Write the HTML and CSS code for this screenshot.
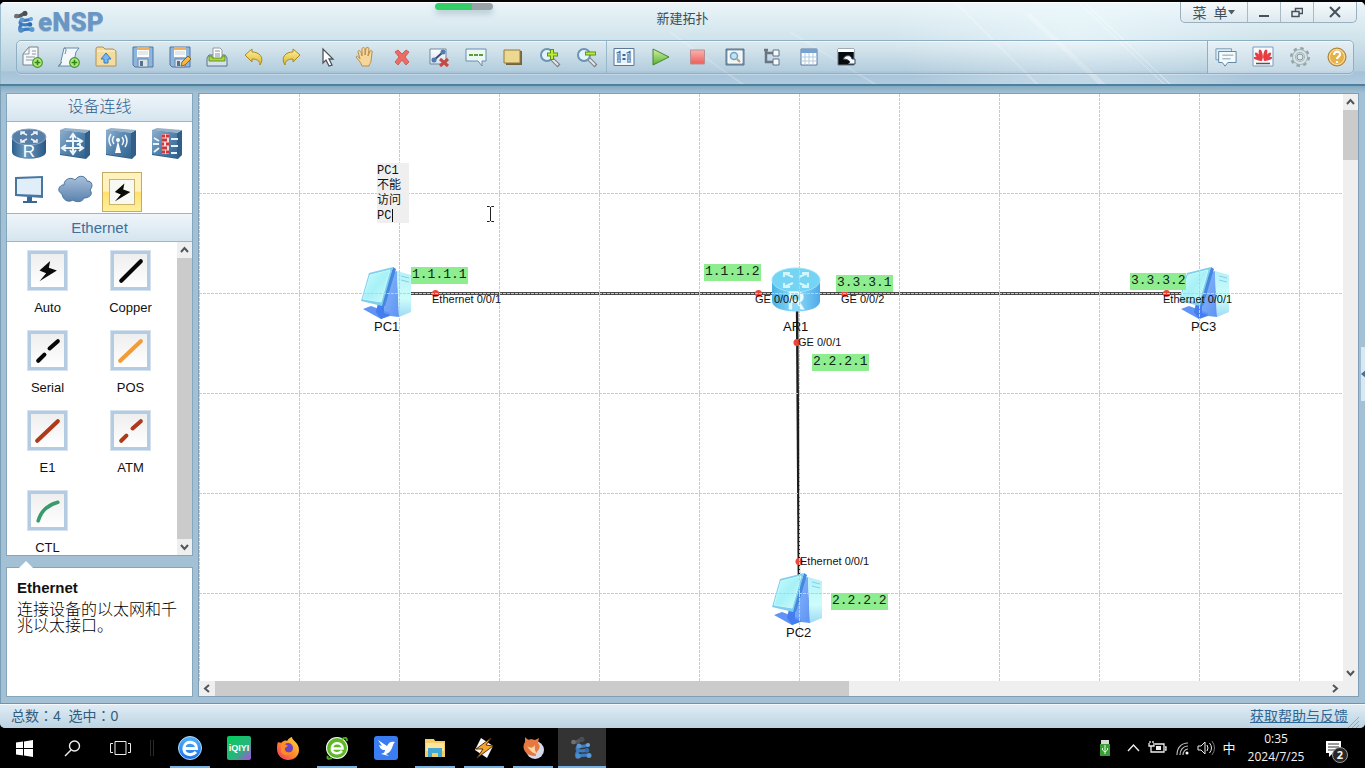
FILE: index.html
```html
<!DOCTYPE html>
<html lang="zh-CN">
<head>
<meta charset="utf-8">
<title>eNSP</title>
<link rel="stylesheet" href="styles.css">
</head>
<body>
<svg class="defs" aria-hidden="true">
  <defs>
    <linearGradient id="gScreen" x1="0" y1="0" x2="1" y2="1"><stop offset="0" stop-color="#c9fcfa"/><stop offset=".5" stop-color="#a6f1f7"/><stop offset="1" stop-color="#d2fdf8"/></linearGradient>
    <linearGradient id="gTower" x1="0" y1="0" x2="1" y2="1"><stop offset="0" stop-color="#8fbdfb"/><stop offset="1" stop-color="#5e92f3"/></linearGradient>
    <linearGradient id="gTowerL" x1="0" y1="0" x2="0" y2="1"><stop offset="0" stop-color="#b5f1f8"/><stop offset=".6" stop-color="#cdfdfb"/><stop offset="1" stop-color="#9ed9f5"/></linearGradient>
    <linearGradient id="gCyl" x1="0" y1="0" x2="1" y2="0"><stop offset="0" stop-color="#4cb2e8"/><stop offset=".5" stop-color="#8bdcf8"/><stop offset="1" stop-color="#4fa9ea"/></linearGradient>
    <linearGradient id="gBlue" x1="0" y1="0" x2="1" y2="1"><stop offset="0" stop-color="#8fb0cd"/><stop offset=".5" stop-color="#5484ad"/><stop offset="1" stop-color="#2f6391"/></linearGradient>
    <linearGradient id="gDark" x1="0" y1="0" x2="1" y2="0"><stop offset="0" stop-color="#2c5f8e"/><stop offset=".4" stop-color="#6f9bc0"/><stop offset="1" stop-color="#285785"/></linearGradient>
    <linearGradient id="gCloud" x1="0" y1="0" x2="0" y2="1"><stop offset="0" stop-color="#a9c0dc"/><stop offset="1" stop-color="#5b83ae"/></linearGradient>
    <linearGradient id="gYellow" x1="0" y1="0" x2="0" y2="1"><stop offset="0" stop-color="#fff3a0"/><stop offset="1" stop-color="#dcb32a"/></linearGradient>
    <linearGradient id="gGreen" x1="0" y1="0" x2="0" y2="1"><stop offset="0" stop-color="#d3f0a8"/><stop offset="1" stop-color="#55b32c"/></linearGradient>
    <linearGradient id="gPaper" x1="0" y1="0" x2="0" y2="1"><stop offset="0" stop-color="#ffffff"/><stop offset="1" stop-color="#d3e1ec"/></linearGradient>
    <linearGradient id="gFox" x1="1" y1="0" x2="0" y2="1"><stop offset="0" stop-color="#ffe23c"/><stop offset=".5" stop-color="#ff8a2a"/><stop offset="1" stop-color="#f0306a"/></linearGradient>
    <linearGradient id="gQiyi" x1="0" y1="0" x2="1" y2="1"><stop offset="0" stop-color="#00d05a"/><stop offset=".6" stop-color="#29b37c"/><stop offset="1" stop-color="#b04be8"/></linearGradient>
    <linearGradient id="gE" x1="0" y1="0" x2="0" y2="1"><stop offset="0" stop-color="#55b4fb"/><stop offset="1" stop-color="#1b6fe4"/></linearGradient>
    <linearGradient id="gStop" x1="0" y1="0" x2="0" y2="1"><stop offset="0" stop-color="#f9b3b0"/><stop offset="1" stop-color="#ee5d58"/></linearGradient>

    <symbol id="plus" viewBox="0 0 10 10"><circle cx="5" cy="5" r="4.4" fill="#b7e77c" stroke="#3f9429"/><path d="M5 2.4v5.2M2.4 5h5.2" stroke="#2f8a1c" stroke-width="1.5"/></symbol>
    <symbol id="disk" viewBox="0 0 22 22"><path d="M1 1h20v20H3l-2-2z" fill="#8db6de" stroke="#51779e"/><path d="M5 1h12v10H5z" fill="#fdfdfd"/><path d="M5 1h12v3H5z" fill="#f1b057"/><path d="M6 6h10M6 8h10" stroke="#c9d3db"/><path d="M6 13h10v8H6z" fill="#dce3e8" stroke="#6887a5"/><path d="M8 15h3v5H8z" fill="#55718d"/></symbol>
    <symbol id="bolt" viewBox="0 0 20 20"><path d="m12 3-8 7 5 2-5 6 13-8-6-2z" fill="#0b0b0b"/></symbol>
    <symbol id="ensp" viewBox="0 0 24 24">
      <path d="M3 6.500q5 0 9-4" fill="none" stroke="#55595e" stroke-width="3.500" stroke-linecap="round"/><circle cx="3.500" cy="6" r="2.300" fill="#6d7176"/><circle cx="12" cy="3.500" r="2.500" fill="#4a4e53"/>
      <path d="M18 9q-5 2-9 1-4 3 0 4.500 4 1 8-.5M9 14.500q-4 3-1 6 6-2 11-1" fill="none" stroke="#3c7cc0" stroke-width="3.200" stroke-linecap="round"/>
      <circle cx="9" cy="10" r="2.500" fill="#5b97d2"/><circle cx="18" cy="9" r="2" fill="#6ba5da"/><circle cx="17" cy="14.500" r="2.300" fill="#2f6db2"/><circle cx="8" cy="20" r="2.700" fill="#4d8bc9"/><circle cx="19" cy="19.500" r="2.500" fill="#5b97d2"/>
    </symbol>
    <symbol id="pc" viewBox="0 0 52 52">
      <path d="M27 7 36 4l2 46-9-1-9-7z" fill="url(#gTower)"/>
      <path d="M36 4 50 8v37l-12 5z" fill="url(#gTowerL)"/><path d="M40 9l8 2M40 13l8 2" stroke="#84cfeb"/>
      <path d="m2 42 8-3 19 7v3l-9 3z" fill="#5f93f5"/><path d="m17 36 6-1v11l6 2-9 4-5-7z" fill="#447df0"/>
      <path d="m32 0 3 2-11 37-4 0z" fill="#4589de"/>
      <path d="M8 6 32 0 21 39 0 34z" fill="#7fcdf0"/>
      <path d="m9 8 20-5-9 32-18-3z" fill="url(#gScreen)" stroke="#c6fafa"/>
    </symbol>
  </defs>
</svg>

<div class="window">
  <header class="header">
    <svg class="glare" aria-hidden="true"><g fill="none" stroke="#fff"><path d="m1078 0 88 84" stroke-opacity=".5"/><path d="m1084 0 88 84" stroke-opacity=".6"/><path d="m1028 12 76 72" stroke-opacity=".25" stroke-width="5"/><path d="m955 0 84 84" stroke-opacity=".25" stroke-width="2"/><path d="m670 30 75 54M790 30l88 54" stroke-opacity=".2" stroke-width="2"/></g></svg>
    <div class="titlebar">
      <div class="brand"><svg width="24" height="24" viewBox="0 0 24 24"><use href="#ensp"/></svg><span>eNSP</span></div>
      <h1 class="title">新建拓扑</h1>
      <div class="controls">
        <button class="menu"><span>菜</span><span>单</span><svg width="8" height="5" viewBox="0 0 8 5"><path d="M0 0h7L3.500 4.500z" fill="#4d5b66"/></svg></button>
        <button aria-label="最小化"><svg width="12" height="12" viewBox="0 0 12 12"><path d="M1 10h10" stroke="#46515b" stroke-width="2"/></svg></button>
        <button aria-label="还原"><svg width="12" height="12" viewBox="0 0 12 12"><path d="M4.500 5V2.500h7v5H8M1 5.500h7v5H1z" fill="none" stroke="#46515b" stroke-width="1.500"/></svg></button>
        <button class="close" aria-label="关闭"><svg width="12" height="12" viewBox="0 0 12 12"><path d="m1 1 10 10M11 1 1 11" stroke="#46515b" stroke-width="2"/></svg></button>
      </div>
      <div class="progress" role="presentation"></div>
    </div>
    <nav class="toolbar" aria-label="工具栏">
      <div class="group edit">
        <button aria-label="新建拓扑"><svg viewBox="0 0 22 22"><path d="M2 8 8 1h9v18H2z" fill="#f6f9fb" stroke="#76818c"/><path d="M8 1v7H2M5 11h9M5 14h7M11 5h4M11 8h4" fill="none" stroke="#8d979f"/><use href="#plus" x="11" y="11" width="11" height="11"/></svg></button>
        <button aria-label="新建试卷"><svg viewBox="0 0 22 22"><path d="M6 2h15l-3 4-3 14H0c3 0 3-3 3-5z" fill="#f3f8fc" stroke="#668aab"/><path d="M6 2c3 0 2 3 1 6M1 19l3-3" fill="none" stroke="#668aab"/><use href="#plus" x="11" y="11" width="11" height="11"/></svg></button>
        <button aria-label="打开"><svg viewBox="0 0 22 22"><path d="M1 3q0-2 2-2h5l2 2h8l3 2v15H1z" fill="#f2dc9f" stroke="#ae9254"/><path d="M2 5h18" stroke="#fff4ce"/><path d="m11 7 5 6h-3v4H9v-4H6z" fill="#76b7f5" stroke="#397bb9"/></svg></button>
        <button aria-label="保存"><svg viewBox="0 0 22 22"><use href="#disk"/></svg></button>
        <button aria-label="另存为"><svg viewBox="0 0 22 22"><use href="#disk"/><path d="m12 20 1-4 6-6 3 3-6 6z" fill="#f7b842" stroke="#8e641d"/></svg></button>
        <button aria-label="打印"><svg viewBox="0 0 22 22"><path d="M3 9 1 12v8h20v-8l-2-3z" fill="#d6e1e9" stroke="#547292"/><path d="M7 2h7l2 2v10H7z" fill="#fff" stroke="#8e9aa5"/><path d="M9 5h5M9 8h5M9 10h5" stroke="#839099"/><path d="M3 10h3v2h10v-2h3v5H3z" fill="#a9d83b" stroke="#67922c"/></svg></button>
        <button aria-label="撤销"><svg viewBox="0 0 22 22"><path d="m2 9 7-6v3c7 0 13 5 8 13 0-4-3-6-8-6v3z" fill="url(#gYellow)" stroke="#a98822"/></svg></button>
        <button aria-label="恢复"><svg viewBox="0 0 22 22"><path d="m20 9-7-6v3C6 6 0 11 5 19c0-4 3-6 8-6v3z" fill="url(#gYellow)" stroke="#a98822"/></svg></button>
        <button aria-label="选择"><svg viewBox="0 0 22 22"><path d="M6 3v14l3-3 3 6 3-1-3-6h4z" fill="#fff" stroke="#4e5359" stroke-width="1.300"/></svg></button>
        <button aria-label="拖动"><svg viewBox="0 0 22 22"><path d="M8 20c-1-4-4-6-6-9 1-2 3 0 4 2L4 6c0-2 2-2 3 0l1 4V3c0-2 3-2 3 0v6l1-7c1-1 3-1 3 1l-1 7 2-5c1-1 3 0 2 2l-1 8c0 2-2 3-2 5z" fill="#f5d69b" stroke="#b98e4e"/></svg></button>
        <button aria-label="删除"><svg viewBox="0 0 22 22"><path d="m4 6 3-2 4 4 4-4 3 2-4 5 4 5-3 3-4-5-4 5-3-3 4-5z" fill="#ec6c63" stroke="#c9605a"/></svg></button>
        <button aria-label="删除连线"><svg viewBox="0 0 22 22"><path d="M2 3h16v15H2z" fill="url(#gPaper)" stroke="#71889c"/><path d="m5 15 10-9" stroke="#344f78" stroke-width="2"/><circle cx="6" cy="14" r="2.500" fill="#4f7cb1"/><circle cx="15" cy="6" r="2.500" fill="#4f7cb1"/><path d="m12 13 8 7M20 13l-8 7" stroke="#c54b42" stroke-width="3"/></svg></button>
        <button aria-label="文本"><svg viewBox="0 0 22 22"><path d="M1 3h20v12h-4v5l-4-5H1z" fill="#edf7f6" stroke="#668fae"/><path d="M4 9h4M9 9h4M14 9h4" stroke="#5b9f31" stroke-width="2"/></svg></button>
        <button aria-label="调色板"><svg viewBox="0 0 22 22"><path d="M4 5h16v14H4z" fill="#6f6541"/><path d="M2 4h16v13H2z" fill="#ecd891" stroke="#927a40"/></svg></button>
        <button aria-label="放大"><svg viewBox="0 0 22 22"><path d="m13 13 7 7" stroke="#7c8287" stroke-width="4"/><path d="m13 13 6 6" stroke="#e6e7e8" stroke-width="2"/><circle cx="8" cy="9" r="6" fill="#e4f3fb" stroke="#6b93b4" stroke-width="2"/><path d="M13 3v11M8 8.500h11" stroke="#579619" stroke-width="4"/><path d="M13 4v9M9 8.500h9" stroke="#c1ea32" stroke-width="2"/></svg></button>
        <button aria-label="缩小"><svg viewBox="0 0 22 22"><path d="m13 13 7 7" stroke="#7c8287" stroke-width="4"/><path d="m13 13 6 6" stroke="#e6e7e8" stroke-width="2"/><circle cx="8" cy="9" r="6" fill="#e4f3fb" stroke="#6b93b4" stroke-width="2"/><path d="M9 7.500h11" stroke="#579619" stroke-width="4"/><path d="M10 7.500h9" stroke="#c1ea32" stroke-width="2"/></svg></button>
      </div>
      <div class="group view">
        <button aria-label="重置"><svg viewBox="0 0 22 22"><path d="M1 2.500h20v17H1z" fill="#e8f1f8" stroke="#58789a"/><path d="M2.500 4h17v14h-17z" fill="none" stroke="#fff"/><path d="m4 8 2-1v8M4 15h4M14 8l2-1v8M14 15h4M11 8v2M11 12v2" fill="none" stroke="#36699d" stroke-width="3"/><path d="m4 8 2-1v8M4 15h4M14 8l2-1v8M14 15h4" fill="none" stroke="#cae3f7"/></svg></button>
        <button aria-label="开启设备"><svg viewBox="0 0 22 22"><path d="m3 3 16 8-16 8z" fill="url(#gGreen)" stroke="#468433"/></svg></button>
        <button aria-label="停止设备"><svg viewBox="0 0 22 22"><path d="M3.500 4h14v14h-14z" fill="url(#gStop)" stroke="#b98d92"/></svg></button>
        <button aria-label="数据抓包"><svg viewBox="0 0 22 22"><path d="M2 3h18v16H2z" fill="#7e97ac" stroke="#577590"/><path d="M4 5h14v12H4z" fill="#f0f3f3" stroke="#fff"/><circle cx="10" cy="10" r="3.500" fill="#c2e3f4" stroke="#74a1bc" stroke-width="1.500"/><path d="m13 13 3 3" stroke="#bc9c6d" stroke-width="2"/></svg></button>
        <button aria-label="显示所有接口"><svg viewBox="0 0 22 22"><path d="M5 3v13h7M5 7h7M3 4h4" fill="none" stroke="#697580" stroke-width="2.500"/><path d="M12 4h6v6h-6zM12 13h6v6h-6z" fill="#f7f9fb" stroke="#5b738a"/></svg></button>
        <button aria-label="显示网格"><svg viewBox="0 0 22 22"><path d="M3 3h16v16H3z" fill="#fff" stroke="#587ba2"/><path d="M3 3h16v4H3z" fill="#75a2d0"/><path d="M3 11h16M3 15h16M7 7v12M11 7v12M15 7v12" stroke="#b6cbe0"/></svg></button>
        <button aria-label="打开命令行"><svg viewBox="0 0 22 22"><path d="M3 3h16v16H3z" fill="#080b0e" stroke="#697580"/><path d="M3 3h16v3H3z" fill="#fff"/><path d="M8 13c3-5 8-4 9 0h3v5h-7l2-2c-1-2-4-3-7-3z" fill="#f5fafc" stroke="#34495f"/></svg></button>
      </div>
      <div class="group help">
        <button aria-label="论坛"><svg viewBox="0 0 24 22"><path d="M1 2h17v12H1z" fill="#dcecf4" stroke="#7498b2"/><path d="M4 5h19v12h-9l-3 4-3-4H4z" fill="#f5fafc" stroke="#557f9e"/><path d="M8 9h12M8 13h9" stroke="#7998ad"/></svg></button>
        <button aria-label="官网"><svg viewBox="0 0 22 22"><path d="M1 1h20v19H1z" fill="#f8fbfd" stroke="#7a9cc0"/><g fill="#e63c42"><ellipse cx="10" cy="8" rx="1.800" ry="5" transform="rotate(-12 11 14)"/><ellipse cx="12" cy="8" rx="1.800" ry="5" transform="rotate(12 11 14)"/><ellipse cx="10" cy="8.500" rx="1.800" ry="5" transform="rotate(-42 11 14)"/><ellipse cx="12" cy="8.500" rx="1.800" ry="5" transform="rotate(42 11 14)"/><ellipse cx="10.500" cy="9" rx="1.500" ry="4.500" transform="rotate(-72 11 14)"/><ellipse cx="11.500" cy="9" rx="1.500" ry="4.500" transform="rotate(72 11 14)"/></g><path d="M4 17.500h14" stroke="#555" stroke-width="1.500"/></svg></button>
        <button aria-label="设置"><svg viewBox="0 0 22 22"><circle cx="11" cy="11" r="8.500" fill="none" stroke="#92a5a9" stroke-width="3" stroke-dasharray="3.300 3.380"/><circle cx="11" cy="11" r="6" fill="none" stroke="#a4b5b8" stroke-width="4"/><circle cx="11" cy="11" r="6" fill="none" stroke="#dbe4e5" stroke-width="2"/><circle cx="11" cy="11" r="3" fill="#dfe9ed" stroke="#80959a"/></svg></button>
        <button aria-label="帮助"><svg viewBox="0 0 22 22"><circle cx="11" cy="11" r="9" fill="#e6b04a" stroke="#a5803a"/><circle cx="11" cy="11" r="7.500" fill="none" stroke="#ffe5a5"/><path d="M8 9c0-5 7-4 6 0-1 2-3 2-3 4M11 15v2" fill="none" stroke="#fff" stroke-width="2.200"/></svg></button>
      </div>
    </nav>
  </header>

  <main class="main">
    <aside class="side">
      <section class="panel devices">
        <h2 class="category">设备连线</h2>
        <div class="types">
          <button aria-label="路由器"><svg viewBox="0 0 36 34"><path d="M1 10v15c0 9 34 9 34 0V10z" fill="url(#gDark)"/><ellipse cx="18" cy="10" rx="17" ry="8" fill="#577fa7" stroke="#86a6c2"/><path d="m16 8-6-3m0 3V5h4M20 8l6-3m-4 0h4v3M16 12l-6 3m0-3v3h4M20 12l6 3m-4 0h4v-3" fill="none" stroke="#e7f1f7" stroke-width="1.500"/><text x="18" y="30" text-anchor="middle" class="icon-r">R</text></svg></button>
          <button aria-label="交换机"><svg viewBox="0 0 36 34"><path d="M3 3 28 6l5-3v25l-4 4-26-4z" fill="#315f88"/><path d="m3 3 5-2 25 2-5 3z" fill="#94b1ca"/><path d="m3 3 25 3v25L3 27z" fill="url(#gBlue)"/><path d="M16 8v18M9 14h14v7H6M13 11l3-4 3 4M13 23l3 4 3-4M9 18l-4 3 4 3M22 18l4 3-4 3M20 11l5 3-5 4" fill="none" stroke="#eef5fa" stroke-width="2"/></svg></button>
          <button aria-label="无线"><svg viewBox="0 0 36 34"><path d="M3 3 28 6l5-3v25l-4 4-26-4z" fill="#315f88"/><path d="m3 3 5-2 25 2-5 3z" fill="#94b1ca"/><path d="m3 3 25 3v25L3 27z" fill="url(#gBlue)"/><path d="m15 14 3 12h-6z" fill="#fff"/><circle cx="15" cy="13" r="2" fill="#fff"/><path d="M11 17q-3-4 0-8M8 19q-4-6 0-12M19 18q3-4 0-8M22 20q4-6 0-12" fill="none" stroke="#edf5fa" stroke-width="1.500"/></svg></button>
          <button aria-label="防火墙"><svg viewBox="0 0 36 34"><path d="M3 3 28 6l5-3v25l-4 4-26-4z" fill="#315f88"/><path d="m3 3 5-2 25 2-5 3z" fill="#94b1ca"/><path d="m3 3 25 3v25L3 27z" fill="url(#gBlue)"/><path d="M13 7h7v20h-7z" fill="#f3dcdc"/><path d="M13 9h3M17 9h3M13 13h5M13 17h2M17 17h3M13 21h5M13 25h3M17 25h3" stroke="#cc363d" stroke-width="3"/><path d="m5 11 5 3M4 17h6M5 25l5-4M22 12h7M22 19h7M22 26h6" stroke="#e9f2f8" stroke-width="2"/></svg></button>
          <button aria-label="终端"><svg viewBox="0 0 36 34"><path d="m4 5 28-1v22L4 24z" fill="#4776a1"/><path d="m6 7 24-1v17L6 22z" fill="#dfeef8"/><path d="M16 25h5v4h5v2H12v-2h4z" fill="#376895"/></svg></button>
          <button aria-label="其他设备"><svg viewBox="0 0 36 34"><path d="M5 22c-7-4-1-10 2-9 0-7 8-8 11-5 4-6 11-4 12 1 6 0 6 6 3 9 4 5-2 8-6 8-2 5-9 4-11 2-5 3-10 0-11-6z" fill="url(#gCloud)" stroke="#48749f"/></svg></button>
          <button class="selected" aria-label="设备连线" aria-pressed="true"><span class="swatch"><svg viewBox="0 0 20 20"><use href="#bolt"/></svg></span></button>
        </div>
        <h2>Ethernet</h2>
        <div class="scroller">
          <div class="links">
            <button><span class="tile"><svg viewBox="0 0 32 32"><use href="#bolt" x="3" y="3" width="26" height="26"/></svg></span>Auto</button>
            <button><span class="tile"><svg viewBox="0 0 32 32"><path d="M7 26 26 7" stroke="#080808" stroke-width="4" stroke-linecap="round"/></svg></span>Copper</button>
            <button><span class="tile"><svg viewBox="0 0 32 32"><path d="m7 26 6-6M18 14l8-7" stroke="#080808" stroke-width="4" stroke-linecap="round"/></svg></span>Serial</button>
            <button><span class="tile"><svg viewBox="0 0 32 32"><path d="M6 26 26 7" stroke="#f39b35" stroke-width="4" stroke-linecap="round"/></svg></span>POS</button>
            <button><span class="tile"><svg viewBox="0 0 32 32"><path d="M6 26 26 7" stroke="#ae391b" stroke-width="4" stroke-linecap="round"/></svg></span>E1</button>
            <button><span class="tile"><svg viewBox="0 0 32 32"><path d="m7 26 5-5M18 14l8-7" stroke="#ae391b" stroke-width="4" stroke-linecap="round"/></svg></span>ATM</button>
            <button><span class="tile"><svg viewBox="0 0 32 32"><path d="M7 26Q11 12 26 8" fill="none" stroke="#3b9a6c" stroke-width="3.500" stroke-linecap="round"/></svg></span>CTL</button>
          </div>
          <div class="vbar"><svg viewBox="0 0 15 16"><path d="m4 10 3.500-4L11 10" class="arrow"/></svg><i></i><svg viewBox="0 0 15 16"><path d="m4 6 3.500 4L11 6" class="arrow"/></svg></div>
        </div>
      </section>
      <section class="panel tip">
        <h3>Ethernet</h3>
        <p>连接设备的以太网和千兆以太接口。</p>
      </section>
    </aside>

    <section class="workspace" aria-label="新建拓扑">
      <div class="canvas">
        <svg class="scene" width="100%" height="100%">
          <defs>
            <pattern id="grid" width="100" height="100" patternUnits="userSpaceOnUse"><path d="M0 99.500h100M.5 0v100" stroke="#cbcbcb" stroke-dasharray="3 1"/></pattern>
          </defs>
          <path d="M212 199.500h770" stroke="#4a4a4a" stroke-width="3"/>
          <path d="M598 200 600 500" stroke="#1c1c1c" stroke-width="2.500"/>
          <use href="#pc" x="162" y="173" width="52" height="52"/>
          <use href="#pc" x="573" y="479" width="52" height="52"/>
          <use href="#pc" x="980" y="173" width="52" height="52"/>
          <path d="M573 186v21c0 14 48 14 48 0v-21z" fill="url(#gCyl)"/><ellipse cx="597" cy="186" rx="24" ry="12" fill="#75d3f4" stroke="#98e4f8"/>
          <path d="m594 183-9-4m0 4v-4h6M600 183l9-4m-6 0h6v4M594 189l-9 4m0-4v4h6M600 189l9 4m-6 0h6v-4" fill="none" stroke="#d2f6fb" stroke-width="2"/>
          <text x="597" y="215" text-anchor="middle" class="icon-router">R</text>
          <g fill="#e9483b"><circle cx="236.500" cy="199.500" r="3.500"/><circle cx="559.500" cy="199.500" r="3.500"/><circle cx="645.500" cy="199.500" r="3.500"/><circle cx="967.500" cy="199.500" r="3.500"/><circle cx="598" cy="248.500" r="3.500"/><circle cx="600" cy="467.500" r="3.500"/></g>
          <rect width="100%" height="100%" fill="url(#grid)"/>
        </svg>
        <textarea class="note" aria-label="文本" spellcheck="false" rows="4">PC1
不能
访问
PC</textarea><i class="caret"></i>
        <svg class="ibeam" width="9" height="16" viewBox="0 0 9 16"><path d="M1 .5h2.500l1 1 1-1H8M1 15.500h2.500l1-1 1 1H8M4.500 1v14" fill="none" stroke="#222"/></svg>
        <span class="ip ip-a">1.1.1.1</span><span class="ip ip-b">1.1.1.2</span><span class="ip ip-c">3.3.3.1</span><span class="ip ip-d">3.3.3.2</span><span class="ip ip-e">2.2.2.1</span><span class="ip ip-f">2.2.2.2</span>
        <span class="port port-a">Ethernet 0/0/1</span><span class="port port-b">GE 0/0/0</span><span class="port port-c">GE 0/0/2</span><span class="port port-d">Ethernet 0/0/1</span><span class="port port-e">GE 0/0/1</span><span class="port port-f">Ethernet 0/0/1</span>
        <span class="name name-a">PC1</span><span class="name name-b">AR1</span><span class="name name-c">PC3</span><span class="name name-d">PC2</span>
      </div>
      <div class="vbar"><svg viewBox="0 0 15 16"><path d="m4 10 3.500-4L11 10" class="arrow"/></svg><i></i><svg viewBox="0 0 15 16"><path d="m4 6 3.500 4L11 6" class="arrow"/></svg></div>
      <div class="hbar"><svg viewBox="0 0 16 15"><path d="M10 4 6 7.500 10 11" class="arrow"/></svg><div class="track"><i></i></div><svg viewBox="0 0 16 15"><path d="m6 4 4 3.500L6 11" class="arrow"/></svg></div>
    </section>
    <button class="handle" aria-label="展开"><svg viewBox="0 0 5 8"><path d="M5 0v8L0 4z" fill="#42708f"/></svg></button>
  </main>

  <footer class="status"><span lang="zh-TW">总数：4&nbsp; 选中：0</span><a href="#">获取帮助与反馈</a><svg class="grip" width="11" height="11" viewBox="0 0 11 11"><path d="M0 11 11 0M4 11l7-7M8 11l3-3" stroke="#90aabd"/></svg></footer>
</div>

<nav class="taskbar" aria-label="任务栏">
  <div class="system">
    <button aria-label="开始"><svg width="17" height="17" viewBox="0 0 17 17"><path d="m0 2.500 7-1V8H0zM8 1.400 17 0v8H8zM0 9h7v6.500l-7-1zM8 9h9v8l-9-1.400z" fill="#fff"/></svg></button>
    <button aria-label="搜索"><svg width="17" height="17" viewBox="0 0 17 17"><circle cx="10.500" cy="6" r="5" fill="none" stroke="#eee" stroke-width="1.400"/><path d="m7 10-6 6" stroke="#eee" stroke-width="1.400"/></svg></button>
    <button aria-label="任务视图"><svg width="21" height="16" viewBox="0 0 21 16"><path d="M5 1.500h11v13H5zM3 3.500H.5v9H3M18 3.500h2.500v9H18" fill="none" stroke="#eee"/></svg></button>
    <i class="divider"></i>
  </div>
  <div class="apps">
    <button class="open" aria-label="浏览器"><svg viewBox="0 0 24 24"><circle cx="12" cy="12" r="11.500" fill="url(#gE)" stroke="#b3daff"/><path d="M6 12.500h12.500c0-8-11.500-8.500-12.500-1s8 9 12 4.500" fill="none" stroke="#fff" stroke-width="3"/></svg></button>
    <button aria-label="爱奇艺"><svg viewBox="0 0 24 24"><rect width="24" height="24" rx="2" fill="url(#gQiyi)"/><text x="12" y="15" text-anchor="middle" class="icon-qiyi">iQIYI</text></svg></button>
    <button aria-label="Firefox"><svg viewBox="0 0 24 24"><path d="M2 6c1 1 2 0 3 1 2-2 4-3 6-2 2-3 4-4 5-4 0 4 7 5 7 13 0 7-6 10-11 10S1 20 1 13c0-3 0-5 1-7z" fill="url(#gFox)"/><circle cx="12" cy="12" r="5" fill="#6943c4"/><path d="M5 8c4-1 5 1 7 2l-3 2c-1 4 4 6 8 3-2 5-9 6-12 1z" fill="#ff8b25"/></svg></button>
    <button class="open" aria-label="360 浏览器"><svg viewBox="0 0 24 24"><circle cx="12" cy="12" r="11" fill="#f5fff0"/><circle cx="12" cy="12" r="10" fill="#5fb827"/><path d="M7 12.500h10.500c0-6.500-9.500-7-10.500-1s6 7.500 10 3.500" fill="none" stroke="#fff" stroke-width="2.600"/><path d="M3 20q-2 4 4 2M17 3q5-3 5 2" fill="none" stroke="#4fa822" stroke-width="2"/></svg></button>
    <button aria-label="迅雷"><svg viewBox="0 0 24 24"><rect width="24" height="24" rx="3" fill="#3a7df2"/><path d="m4 4 9 6c2-4 4-5 8-4-3 2-2 10-9 12l3 2-8-2c3-1 4-2 4-4-4 0-5-2-6-5l3 1z" fill="#fff"/></svg></button>
    <button class="open" aria-label="文件资源管理器"><svg viewBox="0 0 24 24"><path d="M2 3h9l1 2h10v16H2z" fill="#f3ce66"/><path d="M3 7h18v8H3z" fill="#ffe59a"/><path d="M5 12h14v9h-4v-4H9v4H5z" fill="#42a9d5"/></svg></button>
    <button class="open" aria-label="Winamp"><svg viewBox="0 0 24 24"><path d="m9 2 12 8-6 12L3 14z" fill="#f8f8f8"/><path d="m19 2-15 11 7 0-6 9 16-12-7-1z" fill="#f7a52b" stroke="#5a330e"/></svg></button>
    <button class="open" aria-label="火绒"><svg viewBox="0 0 24 24"><circle cx="14" cy="14" r="9" fill="#d5d8ea"/><path d="M4 1q3 4 6 2l4 1 4-2-1 5c5 6-3 8-2 13C4 20 0 12 4 6z" fill="#e67942"/><path d="M6 10q5 4 8-1-1 5 2 9-6-1-10-8z" fill="#ffd4a1"/></svg></button>
    <button class="open active" aria-label="eNSP"><svg viewBox="0 0 24 24"><use href="#ensp"/></svg></button>
  </div>
  <div class="tray">
    <svg width="28" height="18" viewBox="0 0 28 18"><path d="M10 1h8v5h-8z" fill="#d9d9d9"/><path d="M9 5h10v12H9z" fill="#3a9d35"/><path d="M14 6v9M11.500 9v2l2.500 2 2.500-2V9" fill="none" stroke="#e0ffe0"/></svg>
    <svg width="28" height="18" viewBox="0 0 28 18"><path d="m9 12 5.500-6 5.500 6" fill="none" stroke="#eee" stroke-width="1.400"/></svg>
    <svg width="24" height="18" viewBox="0 0 24 18"><path d="M8 5h9v8H6M18 8h1v3h-1M2 4v3h5V4M3 2v2M6 2v2M4 7v6h3" fill="none" stroke="#eee" stroke-width="1.300"/><path d="M9 7h5v4H9z" fill="#eee"/></svg>
    <svg width="24" height="18" viewBox="0 0 24 18"><path d="M6 16C6 9 10 4 17 4M9 16c0-5 3-9 8-9M12 16c0-3 2-6 5-6" fill="none" stroke="#bbb" stroke-width="1.200"/><circle cx="16" cy="14" r="1.500" fill="#fff"/></svg>
    <svg width="22" height="18" viewBox="0 0 22 18"><path d="M3 7h3l4-4v12l-4-4H3z" fill="none" stroke="#eee"/><path d="M12 6q2 3 0 6M14.500 4q4 5 0 10" fill="none" stroke="#eee"/><path d="M17 2q5 7 0 14" fill="none" stroke="#777"/></svg>
    <span class="ime">中</span>
    <time class="clock" datetime="2024-07-25T00:35">0:35<br>2024/7/25</time>
    <button class="notify" aria-label="通知"><svg width="17" height="17" viewBox="0 0 17 17"><path d="M1 1h15v12h-8l-4 4v-4H1z" fill="#fff"/><path d="M3 4h11M3 7h11M3 10h8" stroke="#333"/></svg><b>2</b></button>
  </div>
</nav>
</body>
</html>
```
FILE: styles.css
```css
* { box-sizing: border-box; }
body { margin: 0; height: 100vh; display: flex; flex-direction: column; background: #050508; color: #111; font: 13px/16px "Liberation Sans", "Noto Sans CJK SC", sans-serif; overflow: hidden; }
button { border: 0; padding: 0; background: none; font: inherit; color: inherit; }
h1, h2, h3, p { margin: 0; font-weight: normal; }
.defs { position: absolute; width: 0; height: 0; }
.window { flex: 1; min-height: 0; display: flex; flex-direction: column; margin-top: 2px; border-radius: 5px; overflow: hidden; background: #a4bfd3; }

.header { position: relative; height: 84px; flex: none; border-bottom: 2px solid #4f809e; box-shadow: inset 0 1px #fff, inset 1px 0 #9bbccd;
  background:
    radial-gradient(ellipse 190px 90px at 79% 40%, rgba(240,252,255,.6), transparent),
    linear-gradient(#ebf5f9, #d0e3eb 46%, #b3cddd 84%, #a5c2d9 85%, #b1cbde); }
.glare { position: absolute; inset: 0; width: 100%; height: 100%; }
.titlebar { position: relative; display: grid; grid-template-columns: 1fr auto 1fr; height: 38px; }
.brand { display: flex; align-items: center; gap: 1px; padding: 2px 0 0 13px; color: #6a96c4; font: 900 26px/30px Roboto, sans-serif; }
.brand span { text-shadow: 0 1px #a9c5de; }
.title { font: 13px/32px "Noto Sans CJK SC", sans-serif; color: #3e4e5a; }
.controls { justify-self: end; display: flex; height: 21px; margin-right: 8px; border: 1px solid #9bb0bd; border-top: 0; border-radius: 0 0 5px 5px; background: linear-gradient(#f7fafc, #dce9ef); }
.controls button { display: flex; align-items: center; justify-content: center; width: 33px; border-left: 1px solid #a7bac5; color: #3e4e5a; }
.controls .menu { width: 66px; border: 0; font: 14px/20px "Noto Sans CJK SC", sans-serif; }
.menu span + span { margin-left: 7px; }
.controls .close { width: 43px; }
.progress { position: absolute; left: 435px; top: 1px; width: 58px; height: 7px; border-radius: 4px; background: linear-gradient(90deg, #35cf68 64%, #98a3a9 64%); box-shadow: 0 4px 6px #b5cbd2; }
.toolbar { position: relative; display: flex; height: 34px; margin: 0 11px 0 16px; border: 1px solid #8eb0c5; border-radius: 5px; background: linear-gradient(rgba(255,255,255,.3), rgba(176,203,220,.3)); box-shadow: inset 0 1px rgba(255,255,255,.5), 0 1px rgba(255,255,255,.35); }
.group { display: flex; align-items: center; gap: 7px; }
.group button { width: 30px; height: 30px; display: grid; place-items: center; }
.group svg { width: 22px; height: 22px; }
.edit { padding-right: 4px; border-right: 1px solid #98b8ca; }
.view { padding-left: 2px; flex: 1; }
.help { padding: 0 1px 0 3px; border-left: 1px solid #8eb0c5; border-radius: 0 4px 4px 0; background: rgba(255,255,255,.25); }

.main { position: relative; flex: 1; min-height: 0; display: flex; gap: 5px; padding: 7px 6px 6px; background: linear-gradient(#82abc2, #a4c0d4 7px); box-shadow: inset 1px 0 #799eb8; }
.side { width: 187px; flex: none; display: flex; flex-direction: column; gap: 11px; }
.panel { border: 1px solid #83a6bd; background: #fff; }
.devices { flex: 1; min-height: 0; display: flex; flex-direction: column; }
.panel h2 { height: 28px; flex: none; text-align: center; font-size: 15px; line-height: 27px; color: #3e6f9d; background: linear-gradient(#eff5fa, #d5e5ef); border-bottom: 1px solid #9bb6c8; }
.panel .category { font-size: 16px; line-height: 25px; font-weight: 300; color: #2f5f8d; }
.types { display: grid; grid-template-columns: repeat(4, 46px); grid-template-rows: 43px 48px; align-items: center; height: 92px; border-bottom: 1px solid #9bb6c8; }
.types button { display: grid; place-items: center; width: 44px; }
.types button > svg { width: 36px; height: 34px; }
.types .selected { width: 40px; height: 40px; margin: 6px 0 0 3px; border: 1px solid #c2aa67; background: linear-gradient(#fff2bc 48%, #ffe16b 50%, #ffef9d); }
.swatch { width: 26px; height: 26px; border: 1px solid #c8b36f; background: #f9f9f4; }
.swatch svg { display: block; width: 24px; height: 24px; }
.icon-r { font: 17px "Liberation Sans", sans-serif; fill: #fff; }
.scroller { flex: 1; min-height: 0; display: flex; overflow: hidden; }
.links { flex: 1; min-width: 0; display: grid; grid-template-columns: 83px 83px; grid-auto-rows: 80px; padding-top: 8px; }
.links button { display: flex; flex-direction: column; align-items: center; gap: 9px; width: 81px; }
.tile { width: 41px; height: 41px; border: 4px solid #b3cbe3; outline: 1px solid #d5e1eb; outline-offset: -1px; background: linear-gradient(#eee, #fff); }
.tile svg { display: block; width: 33px; height: 33px; }
.vbar { display: flex; flex-direction: column; width: 15px; flex: none; background: #efefef; }
.vbar svg { width: 15px; height: 16px; flex: none; }
.vbar i { flex: 1; background: #cbcbcb; }
.arrow { fill: none; stroke: #50565b; stroke-width: 2; }
.tip { position: relative; height: 130px; padding: 12px 10px; }
.tip::before { content: ""; position: absolute; left: 12px; top: -7px; border: 7px solid transparent; border-top: 0; border-bottom-color: #fff; }
.tip h3 { font-size: 15px; font-weight: bold; line-height: 16px; }
.tip p { margin-top: 4px; font: 16px/16px "Noto Sans CJK SC", sans-serif; font-weight: 300; color: #000; }

.workspace { flex: 1; min-width: 0; display: grid; grid-template: minmax(0, 1fr) 15px / minmax(0, 1fr) 15px; border: 1px solid #809fb7; background: #efefef; }
.canvas { position: relative; overflow: hidden; background: #fff; }
.scene { position: absolute; inset: 0; }
.icon-router { font: 24px "Liberation Sans", sans-serif; fill: #e9fdff; stroke: #e9fdff; }
.workspace .vbar i { flex: none; height: 50px; }
.workspace .vbar { justify-content: flex-start; }
.workspace .vbar svg:last-child { margin-top: auto; }
.hbar { grid-column: 1; display: flex; }
.hbar svg { width: 16px; height: 15px; flex: none; }
.track { flex: 1; }
.track i { display: block; width: 57%; height: 15px; background: #cbcbcb; }
.note { position: absolute; left: 178px; top: 69px; width: 32px; height: 60px; padding: 1px 0 0; border: 0; resize: none; overflow: hidden; background: #efefef; color: #111; font: 12px/15px "Liberation Mono", "Noto Sans CJK SC", monospace; }
.caret { position: absolute; left: 193px; top: 115px; width: 1px; height: 13px; background: #111; }
.ibeam { position: absolute; left: 287px; top: 112px; }
.ip { position: absolute; width: 57px; height: 17px; padding-left: 1px; background: #8eed8e; color: #10251a; font: 13px/16px "Liberation Mono", monospace; }
.ip-a { left: 212px; top: 173px; }
.ip-b { left: 505px; top: 170px; }
.ip-c { left: 637px; top: 181px; }
.ip-d { left: 931px; top: 179px; width: 56px; }
.ip-e { left: 613px; top: 260px; }
.ip-f { left: 632px; top: 499px; }
.port { position: absolute; white-space: nowrap; font-size: 11px; line-height: 13px; }
.port-a { left: 233px; top: 199px; }
.port-b { left: 556px; top: 199px; }
.port-c { left: 642px; top: 199px; }
.port-d { left: 964px; top: 199px; }
.port-e { left: 599px; top: 242px; }
.port-f { left: 601px; top: 461px; }
.name { position: absolute; }
.name-a { left: 175px; top: 225px; }
.name-b { left: 584px; top: 225px; }
.name-c { left: 992px; top: 225px; }
.name-d { left: 587px; top: 531px; }
.handle { position: absolute; right: 0; top: 261px; width: 4px; height: 54px; display: grid; place-items: center end; background: #d8e8f2; }
.handle svg { width: 4px; height: 8px; }

.status { height: 25px; flex: none; display: flex; align-items: center; padding: 0 6px 0 11px; border-top: 1px solid #7294aa; background: linear-gradient(#e1edf5, #bcd3e2); color: #315c7e; font: 14px/24px "Liberation Sans", "Noto Sans CJK SC", sans-serif; box-shadow: inset 0 1px #f3f9fc; }
.status span { font-family: "Liberation Sans", "Noto Sans CJK TC", sans-serif; }
.status a { margin-left: auto; color: #2c6695; }
.grip { align-self: flex-end; }

.taskbar { height: 40px; flex: none; display: flex; background: #000; color: #f4f4f4; }
.system { display: flex; width: 166px; flex: none; }
.system button { width: 48px; display: grid; place-items: center; }
.divider { width: 4px; height: 16px; margin: 12px 0 0 6px; border: 1px solid #2a2a2a; border-width: 0 1px; }
.apps { display: flex; gap: 1px; }
.apps button { position: relative; width: 48px; display: grid; place-items: center; }
.apps svg { width: 24px; height: 24px; }
.open::after { content: ""; position: absolute; left: 4px; right: 4px; bottom: 0; height: 2px; background: #76b3e5; }
.active { background: #333; }
.active::after { left: 0; right: 0; }
.icon-qiyi { font: bold 9px "Liberation Sans", sans-serif; fill: #fff; }
.tray { display: flex; align-items: center; margin-left: auto; }
.ime { width: 24px; text-align: center; font: 13px/20px "Noto Sans CJK SC", sans-serif; }
.clock { width: 70px; text-align: center; font: 12px/18px "Open Sans", sans-serif; }
.notify { position: relative; width: 54px; height: 40px; display: grid; place-items: center; padding-right: 10px; }
.notify b { position: absolute; left: 21px; top: 19px; width: 16px; height: 16px; border: 1px solid #999; border-radius: 50%; background: #272727; font: bold 11px/14px "Noto Sans", sans-serif; text-align: center; }
```
